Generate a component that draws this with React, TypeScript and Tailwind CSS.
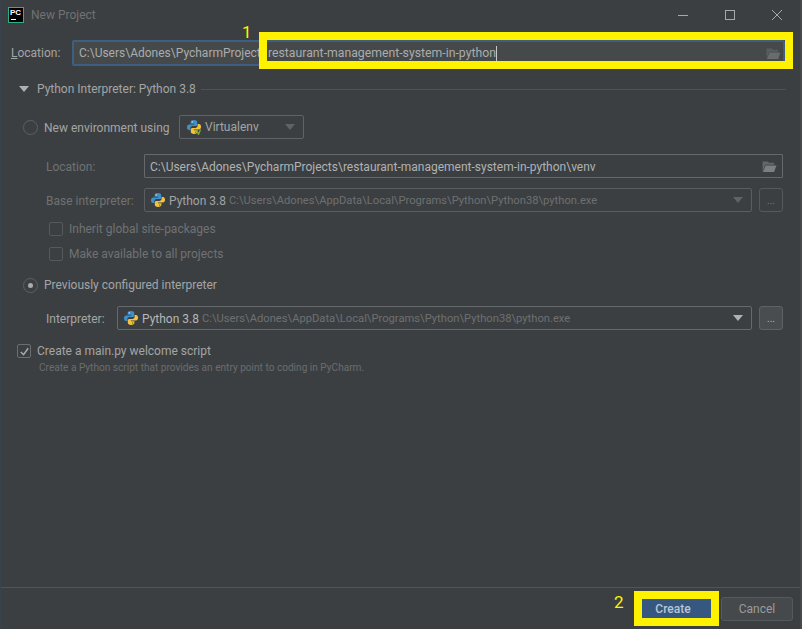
const PythonIcon = ({ venv }: { venv?: boolean }) => (
  <svg viewBox="0 0 16 16" className="w-[16px] h-[16px] shrink-0">
    <path d="M8 1C5.6 1 4.6 1.9 4.6 3.2V4.8H8.2V5.4H3.1C1.8 5.4 1 6.500 1 8.200C1 9.900 1.800 11 3 11H4.400V9.300C4.400 8 5.400 7.100 6.700 7.100H9.500C10.500 7.100 11.200 6.400 11.200 5.400V3.200C11.200 1.900 10 1 8 1Z" fill="#3f8fc9" />
    <path d="M8 15C10.400 15 11.400 14.100 11.400 12.800V11.200H7.800V10.600H12.900C14.200 10.600 15 9.500 15 7.800C15 6.100 14.200 5 13 5H11.600V6.700C11.600 8 10.600 8.900 9.300 8.900H6.500C5.500 8.900 4.800 9.600 4.800 10.600V12.800C4.800 14.100 6 15 8 15Z" fill="#f2c43d" />
    <circle cx="6.300" cy="2.900" r="0.700" fill="#dfe8ee" />
    <circle cx="9.700" cy="13.100" r="0.700" fill="#5c4d1c" />
    {venv && <path d="M10.500 10.500L12.500 15.500L14.500 10.500" fill="none" stroke="#7fa83a" strokeWidth="1.400" />}
  </svg>
);

const FolderIcon = ({ dim }: { dim?: boolean }) => (
  <svg viewBox="0 0 16 14" className={`w-[15px] h-[13px] ${dim ? 'opacity-50' : 'opacity-80'}`}>
    <path d="M0.500 1.500H6L7.500 3H13V5H3.500L0.500 12Z" fill="#6e7274" />
    <path d="M3.800 5.800H15.500L13 13H0.800Z" fill="#8b8f91" />
  </svg>
);

const Caret = ({ dim }: { dim?: boolean }) => (
  <span className={`w-0 h-0 border-l-[5px] border-r-[5px] border-t-[6px] border-l-transparent border-r-transparent ${dim ? 'border-t-[#5f6365]' : 'border-t-[#afb1b3]'}`} />
);

const EllipsisButton = ({ dim }: { dim?: boolean }) => (
  <div className={`w-[24px] h-[24px] ml-[7px] rounded-[3px] border flex items-center justify-center text-[10px] ${dim ? 'border-[#55595b] text-[#777]' : 'border-[#5e6264] bg-[#494d4f] text-[#bbb]'}`}>
    ...
  </div>
);

const PythonSelect = ({ dim, width }: { dim?: boolean; width: string }) => (
  <div className={`${width} h-[24px] shrink-0 rounded-[2px] border flex items-center pl-[5px] pr-[8px] ${dim ? 'border-[#5a5e60]' : 'border-[#66696b]'}`}>
    <PythonIcon />
    <span className={`ml-[3px] pt-[2px] ${dim ? 'text-[#a0a3a4]' : 'text-[#b5b7b8]'}`}>Python 3.8</span>
    <span className="ml-[3px] pt-[2px] text-[11.200px] text-[#6d7072] whitespace-nowrap">C:\Users\Adones\AppData\Local\Programs\Python\Python38\python.exe</span>
    <span className="ml-auto flex"><Caret dim={dim} /></span>
  </div>
);

const Check = ({ checked }: { checked?: boolean }) => (
  <span className={`w-[14px] h-[14px] shrink-0 rounded-[2px] border flex items-center justify-center ${checked ? 'border-[#6b6e70]' : 'border-[#55595b]'}`}>
    {checked && (
      <svg viewBox="0 0 12 12" className="w-[11px] h-[11px]">
        <path d="M2 6.500L5 9.500L10 2.500" fill="none" stroke="#a9abac" strokeWidth="1.600" />
      </svg>
    )}
  </span>
);

export default function App() {
  return (
    <div className="relative w-[802px] h-[629px] overflow-hidden bg-[#3c3f41] border-l border-[#39434d] border-r-2 border-r-[#46494b] flex flex-col text-[12px] text-[#a3a5a6] font-['Roboto','Noto_Sans',sans-serif]">
      {/* Title bar */}
      <div className="h-[30px] flex items-center pl-[7px] shrink-0">
        <div className="w-[16px] h-[16px] bg-black border border-[#2fae8e] relative">
          <span className="absolute left-[1px] top-[-1px] text-[8px] font-bold text-white leading-[11px] font-['Liberation_Sans',sans-serif]">PC</span>
          <span className="absolute left-[2px] bottom-[2px] w-[5px] h-[1px] bg-white" />
        </div>
        <span className="ml-[7px] text-[#6f7274] text-[12px]">New Project</span>
        <div className="ml-auto flex items-center text-[#a6a8a9]">
          <span className="w-[10px] h-[1px] bg-[#a6a8a9] mr-[37px]" />
          <span className="w-[10px] h-[10px] border border-[#a6a8a9] mr-[37px]" />
          <svg viewBox="0 0 10 10" className="w-[10px] h-[10px] mr-[18px]">
            <path d="M0 0L10 10M10 0L0 10" stroke="#a6a8a9" strokeWidth="1" />
          </svg>
        </div>
      </div>

      {/* Project location */}
      <div className="flex items-center h-[26px] mt-[10px] pl-[10px] pr-[15px] shrink-0">
        <span className="w-[61px]"><span className="underline">L</span>ocation:</span>
        <div className="flex-1 h-[26px] rounded-[2px] border-2 border-[#3f5f80] bg-[#45494a] flex items-center pl-[5px] pr-[2px]">
          <span className="w-[189px] shrink-0 text-[#aaacad] whitespace-nowrap">C:\Users\Adones\PycharmProjects</span>
          <span className="text-[12.250px] text-[#aaacad] whitespace-nowrap">restaurant-management-system-in-python</span>
          <span className="w-[1px] h-[15px] bg-[#c8c8c8]" />
          <span className="ml-auto flex"><FolderIcon dim /></span>
        </div>
      </div>

      {/* Section header */}
      <div className="flex items-center mt-[13px] h-[20px] pl-[18px] pr-[14px] shrink-0">
        <Caret />
        <span className="ml-[8px]">Python Interpreter: Python 3.8</span>
        <span className="flex-1 h-[1px] bg-[#505355] ml-[5px]" />
      </div>

      {/* New environment */}
      <div className="flex items-center mt-[16px] h-[24px] pl-[22px] shrink-0">
        <span className="w-[15px] h-[15px] rounded-full border border-[#5d6163]" />
        <span className="ml-[6px] w-[135px] pt-[1px]">New environment using</span>
        <div className="w-[125px] h-[24px] rounded-[2px] border border-[#606365] flex items-center pl-[6px] pr-[8px]">
          <PythonIcon venv />
          <span className="ml-[3px]">Virtualenv</span>
          <span className="ml-auto flex"><Caret dim /></span>
        </div>
      </div>

      <div className="flex items-center mt-[15px] h-[24px] pl-[45px] shrink-0">
        <span className="w-[98px] pt-[2px] text-[#6f7274]">Location:</span>
        <div className="w-[639px] h-[24px] rounded-[1px] border border-[#66696b] flex items-center pl-[5px] pr-[5px]">
          <span className="pt-[1px] text-[#b0b2b3] whitespace-nowrap">C:\Users\Adones\PycharmProjects\restaurant-management-system-in-python\venv</span>
          <span className="ml-auto flex"><FolderIcon /></span>
        </div>
      </div>

      <div className="flex items-center mt-[10px] h-[24px] pl-[45px] shrink-0">
        <span className="w-[98px] pt-[2px] text-[#6f7274]">Base interpreter:</span>
        <PythonSelect dim width="w-[608px]" />
        <EllipsisButton dim />
      </div>

      <label className="flex items-center mt-[9px] h-[16px] pl-[48px] text-[#6f7274] shrink-0">
        <Check />
        <span className="ml-[6px]">Inherit global site-packages</span>
      </label>
      <label className="flex items-center mt-[9px] h-[16px] pl-[48px] text-[#6f7274] shrink-0">
        <Check />
        <span className="ml-[6px]">Make available to all projects</span>
      </label>

      {/* Previously configured */}
      <div className="flex items-center mt-[14px] h-[18px] pl-[22px] shrink-0">
        <span className="w-[15px] h-[15px] rounded-full border border-[#5d6163] flex items-center justify-center">
          <span className="w-[5px] h-[5px] rounded-full bg-[#a9abac]" />
        </span>
        <span className="ml-[6px]">Previously configured interpreter</span>
      </div>

      <div className="flex items-center mt-[12px] h-[24px] pl-[45px] shrink-0">
        <span className="w-[71px] pt-[2px]">Interpreter:</span>
        <PythonSelect width="w-[635px]" />
        <EllipsisButton />
      </div>

      <label className="flex items-center mt-[13px] h-[16px] pl-[16px] shrink-0">
        <Check checked />
        <span className="ml-[6px]">Create a main.py welcome script</span>
      </label>
      <p className="mt-[1px] ml-[38px] text-[10.100px] text-[#6a6d6f] leading-[16px]">Create a Python script that provides an entry point to coding in PyCharm.</p>

      {/* Footer */}
      <div className="mt-auto h-[42px] border-t border-[#515456] flex items-center justify-end pr-[7px] shrink-0">
        <button className="w-[76px] h-[24px] mr-[10px] rounded-[3px] bg-[#365880] text-[#bbc6d1] font-medium">Create</button>
        <button className="w-[72px] h-[24px] rounded-[3px] border border-[#55595b] bg-[#46494b] text-[#9a9c9d]">Cancel</button>
      </div>

      {/* Yellow annotations drawn over the screenshot */}
      <div className="absolute left-[258px] top-[32px] w-[534px] h-[37px] border-[8px] border-[#fff200]" />
      <div className="absolute left-[633px] top-[591px] w-[85px] h-[35px] border-[8px] border-[#fff200]" />
      <span className="absolute left-[241px] top-[21px] text-[17px] leading-[22px] text-[#fff200]">1</span>
      <span className="absolute left-[613px] top-[591px] text-[17px] leading-[22px] text-[#fff200]">2</span>
    </div>
  );
}
